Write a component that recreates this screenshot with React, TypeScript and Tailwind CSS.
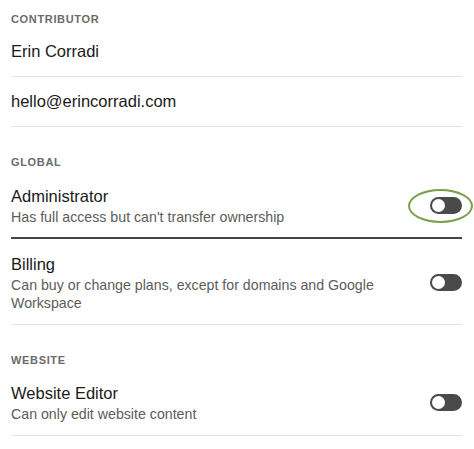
import React from 'react';

const font = { fontFamily: '"Liberation Sans", Arial, sans-serif' };

const SectionLabel = ({ children, first }: { children: React.ReactNode; first?: boolean }) => (
  <div
    className={`${first ? 'pt-[11px]' : 'pt-[27px]'} text-[11px] leading-[16px] font-semibold tracking-[0.06em] text-[#6b6b6b] uppercase`}
  >
    {children}
  </div>
);

const Toggle = () => (
  <div className="relative h-[17px] w-[32px] shrink-0 rounded-full bg-[#4a4a4a]">
    <div className="absolute left-[2px] top-[2px] h-[13px] w-[13px] rounded-full bg-white" />
  </div>
);

const InfoRow = ({ children }: { children: React.ReactNode }) => (
  <div className="flex h-[50px] items-center border-b border-[#e3e3e3] text-[16.5px] text-[#1a1a1a]">
    {children}
  </div>
);

const PermissionRow = ({
  title,
  desc,
  dark,
  highlight,
}: {
  title: string;
  desc: string;
  dark?: boolean;
  highlight?: boolean;
}) => (
  <div
    className={`flex items-center justify-between gap-4 ${
      dark ? 'pt-[14px] pb-[11px] border-b-2 border-[#444]' : 'pt-[13px] pb-[12px] border-b border-[#e3e3e3]'
    }`}
  >
    <div className="min-w-0">
      <div className="text-[16.5px] leading-[24px] text-[#1a1a1a]">{title}</div>
      <div className="text-[14.2px] leading-[18px] text-[#5c5c5c]">{desc}</div>
    </div>
    <div className="relative">
      {highlight && (
        <div className="absolute left-[-22px] top-[-8px] h-[34px] w-[65px] rounded-[50%] border-2 border-[#7aa04a]" />
      )}
      <Toggle />
    </div>
  </div>
);

export default function App() {
  return (
    <div className="min-h-screen bg-white pl-[11px] pr-[12px]" style={font}>
      <SectionLabel first>Contributor</SectionLabel>
      <InfoRow>Erin Corradi</InfoRow>
      <InfoRow>hello@erincorradi.com</InfoRow>

      <SectionLabel>Global</SectionLabel>
      <PermissionRow
        title="Administrator"
        desc="Has full access but can't transfer ownership"
        dark
        highlight
      />
      <PermissionRow
        title="Billing"
        desc="Can buy or change plans, except for domains and Google Workspace"
      />

      <SectionLabel>Website</SectionLabel>
      <PermissionRow title="Website Editor" desc="Can only edit website content" />
    </div>
  );
}
